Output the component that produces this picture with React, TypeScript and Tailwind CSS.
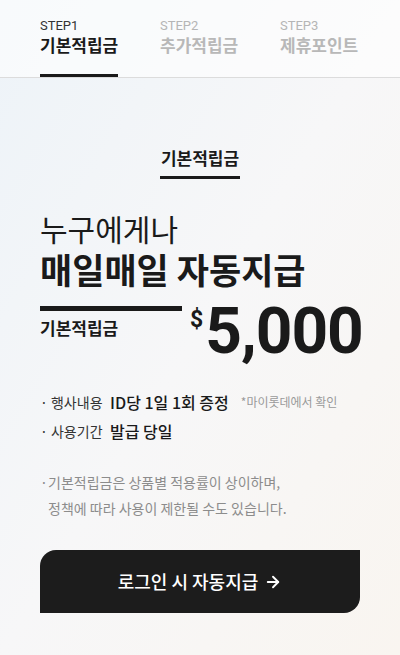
import {ArrowRight} from 'lucide-react';

const tabs = [
  {step: 'STEP1', label: '기본적립금', active: true},
  {step: 'STEP2', label: '추가적립금', active: false},
  {step: 'STEP3', label: '제휴포인트', active: false},
];

const ko = {fontFamily: '"Noto Sans CJK KR", "Noto Sans", sans-serif'};

export default function App() {
  return (
    <div
      className="w-[400px] h-[655px] overflow-hidden bg-gradient-to-br from-[#edf3f8] via-[#f7f7f8] to-[#f9f5f0] text-[#1a1a1a]"
      style={ko}
    >
      {/* 상단 탭 */}
      <div className="flex pl-[40px] h-[78px] border-b border-[#dcdcdc] bg-white/60">
        {tabs.map((t) => (
          <div key={t.step} className="w-[120px] shrink-0 flex flex-col">
            <div className="w-fit flex flex-col h-full">
              <span
                className={`mt-[18px] text-[13px] leading-[15px] ${t.active ? 'text-[#333]' : 'text-[#b5b5b5]'}`}
                style={{fontFamily: 'Roboto, sans-serif'}}
              >
                {t.step}
              </span>
              <span
                className={`text-[17px] leading-[24px] font-bold ${t.active ? 'text-[#1a1a1a]' : 'text-[#b8b8b8]'}`}
              >
                {t.label}
              </span>
              {t.active && <span className="mt-auto h-[3px] bg-[#1a1a1a]" />}
            </div>
          </div>
        ))}
      </div>

      <div className="px-[40px]">
        {/* 섹션 제목 */}
        <div className="flex justify-center mt-[68px]">
          <div className="flex flex-col items-center">
            <span className="text-[17px] leading-[24px] font-bold">기본적립금</span>
            <span className="mt-[6px] h-[3px] w-[80px] bg-[#1a1a1a]" />
          </div>
        </div>

        <div className="mt-[30px] text-[30px] leading-[38px] font-normal">누구에게나</div>
        <div className="text-[35px] leading-[44px] font-bold">매일매일 자동지급</div>

        {/* 금액 */}
        <div className="flex mt-[10px]">
          <div className="flex flex-col w-[142px] shrink-0 pt-[5px]">
            <span className="h-[5px] bg-[#1a1a1a]" />
            <span className="mt-[6px] text-[17px] leading-[22px] font-bold">기본적립금</span>
          </div>
          <div className="flex items-start shrink-0 ml-[8px]" style={{fontFamily: 'Roboto, sans-serif'}}>
            <span className="text-[23px] leading-[22px] font-bold mt-[8px]">$</span>
            <span className="text-[64px] leading-[62px] font-bold tracking-[-1px] ml-[2px]">5,000</span>
          </div>
        </div>

        {/* 정보 */}
        <div className="mt-[27px] flex flex-col gap-[5px]">
          <div className="flex items-center h-[24px]">
            <span className="text-[14px] text-[#333] w-[70px]">· 행사내용</span>
            <span className="text-[16px] font-medium text-[#1a1a1a]">ID당 1일 1회 증정</span>
            <span className="ml-[12px] text-[12px] text-[#9a9a9a]">*마이롯데에서 확인</span>
          </div>
          <div className="flex items-center h-[24px]">
            <span className="text-[14px] text-[#333] w-[70px]">· 사용기간</span>
            <span className="text-[16px] font-medium text-[#1a1a1a]">발급 당일</span>
          </div>
        </div>

        <div className="mt-[26px] text-[14px] leading-[26px] text-[#8c8c8c] flex">
          <span className="w-[8px]">·</span>
          <span>
            기본적립금은 상품별 적용률이 상이하며,
            <br />
            정책에 따라 사용이 제한될 수도 있습니다.
          </span>
        </div>

        {/* 버튼 */}
        <button className="mt-[29px] w-full h-[63px] bg-[#1c1c1c] text-white rounded-tl-[16px] rounded-br-[16px] flex items-center justify-center gap-[6px]">
          <span className="text-[18px] font-medium">로그인 시 자동지급</span>
          <ArrowRight className="w-[18px] h-[18px]" strokeWidth={2.5} />
        </button>
      </div>
    </div>
  );
}
